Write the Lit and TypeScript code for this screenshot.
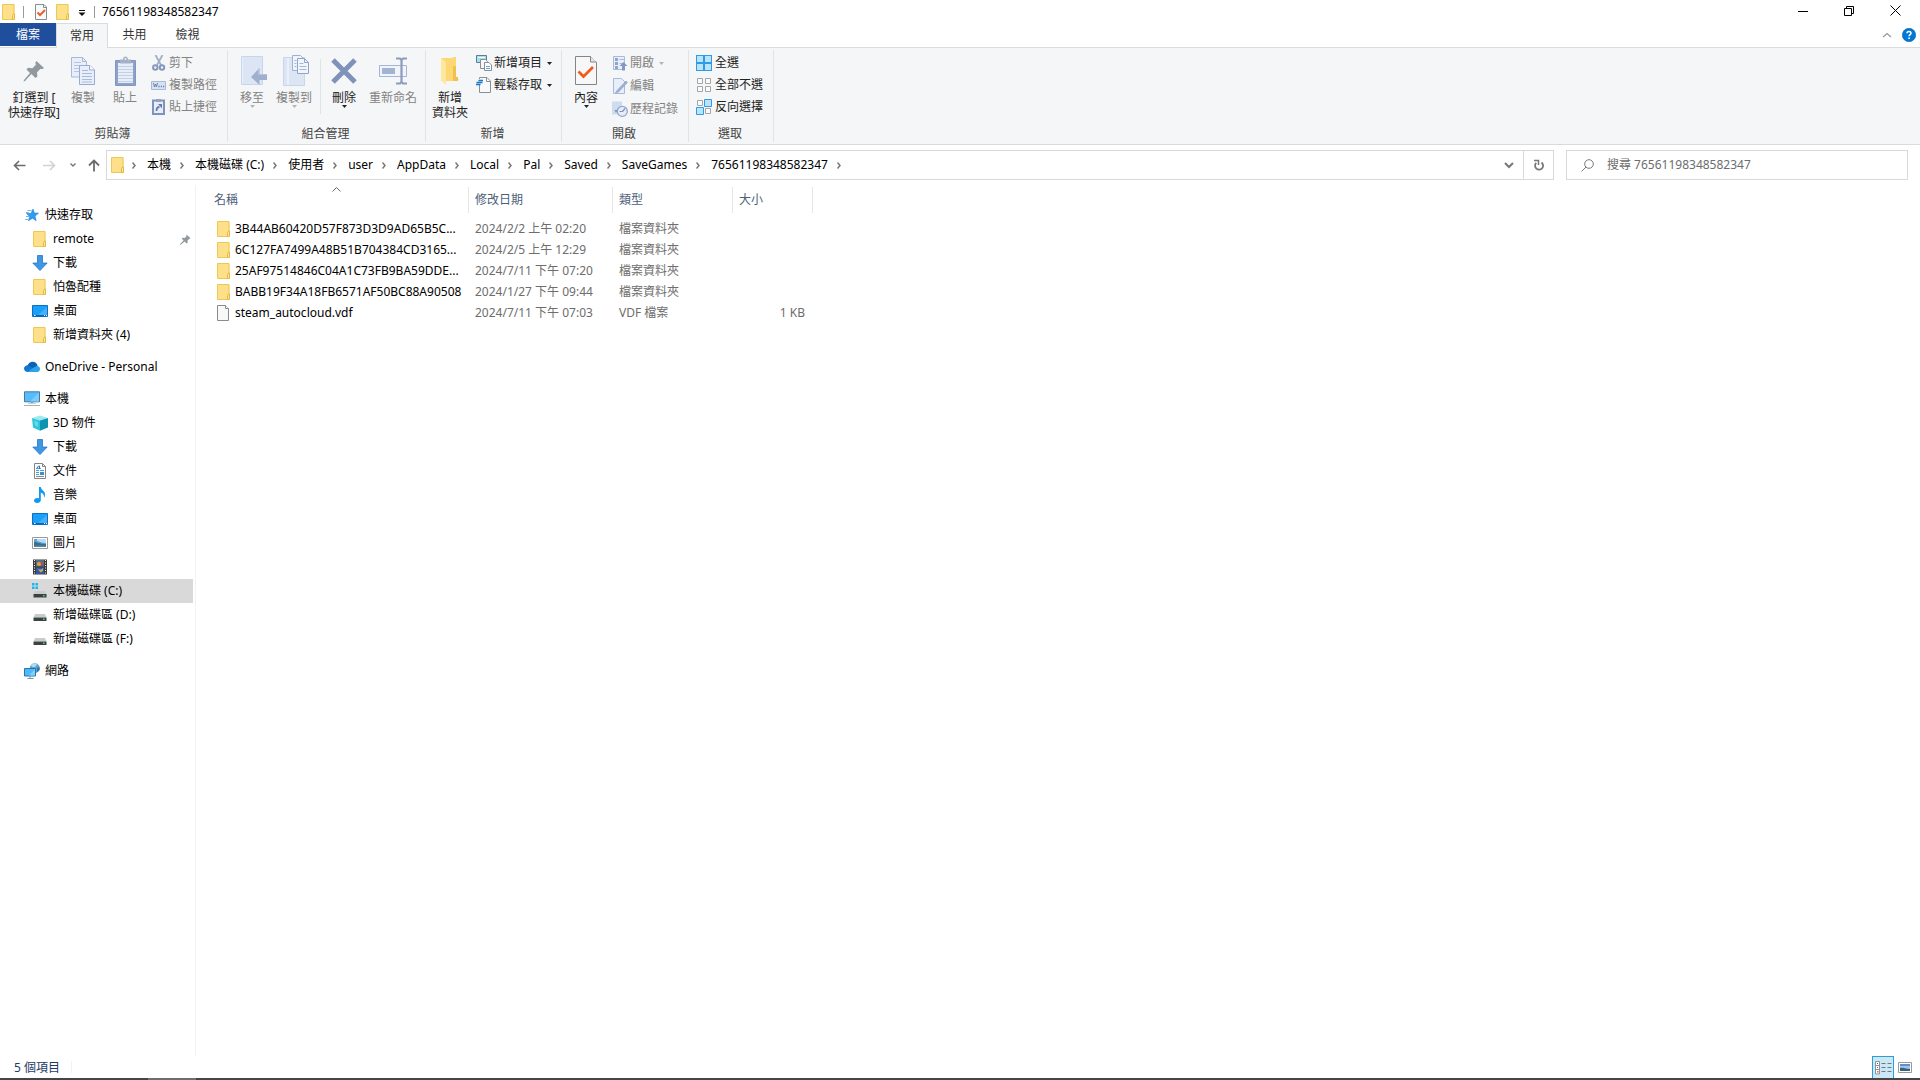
import { LitElement, html, svg, css, nothing, TemplateResult } from "lit";
import { customElement, property } from "lit/decorators.js";
import { classMap } from "lit/directives/class-map.js";

type Glyph = { w: number; h: number; art: TemplateResult };

const glyphs: Record<string, Glyph> = {
  folder: {
    w: 16, h: 16,
    art: svg`<path d="M1.5.5h12v15h-12z" fill="#ffe08a"/><path d="M13 11V.5H1.500v15h10.500" fill="none" stroke="#ecc955"/><path d="M11.500 15.500v-4l1-1.500h1v5.500z" fill="#ffe694" stroke="#e3ba40"/>`,
  },
  file: {
    w: 16, h: 16,
    art: svg`<path d="M1.500.5h8l3 3v12h-11z" fill="#f7f8f8" stroke="#8b8b8b"/><path d="M9.500.5v3h3" fill="#fff" stroke="#8b8b8b"/>`,
  },
  checkSmall: {
    w: 14, h: 16,
    art: svg`<path d="M1.500.5h8.500l2.500 2.500v12.500h-11z" fill="#f8f9fa" stroke="#8a8d90"/><path d="M9.500.5v3h3" fill="none" stroke="#8a8d90"/><path d="M3.500 8.500l2.500 2.500 5-5" fill="none" stroke="#e8622a" stroke-width="2"/>`,
  },
  customize: { w: 8, h: 6, art: svg`<path d="M1 0h6v1H1zM.5 2.500h7L4 6z" fill="#111"/>` },
  minimize: { w: 10, h: 10, art: svg`<path d="M0 5.500h10" stroke="#000"/>` },
  restore: { w: 10, h: 10, art: svg`<path d="M.5 2.500h7v7h-7zM2.500 2.500v-2h7v7h-2" fill="none" stroke="#000"/>` },
  close: { w: 11, h: 11, art: svg`<path d="M.5.5l10 10M10.500.5l-10 10" stroke="#000"/>` },
  collapse: { w: 10, h: 6, art: svg`<path d="M1 5l4-3.500L9 5" fill="none" stroke="#9a9a9a" stroke-width="1.300"/>` },
  help: {
    w: 14, h: 14,
    art: svg`<circle cx="7" cy="7" r="6.700" fill="#0078d7" stroke="#0b5ea8" stroke-width=".6"/><path d="M5 5.300C5 3 9 3 9 5.200 9 6.600 7.100 6.600 7.100 8.300" fill="none" stroke="#fff" stroke-width="1.500"/><path d="M6.300 9.500h1.600v1.500H6.300z" fill="#fff"/>`,
  },
  pinBig: {
    w: 22, h: 22,
    art: svg`<path d="M13.500 1l7.500 7-2 1.200-1.500-.4-3.500 3.400.4 4.300-1.900 1.500-4.100-4L2 21l-1.500.6.500-1.600 6-7L3.500 9.500 5 7.800l4.500.4 3.400-3.400-.6-2z" fill="#8f999f"/>`,
  },
  pinSmall: {
    w: 11, h: 11,
    art: svg`<path d="M6.500.5l4 3.800-1.300.7-1.700 1.600.2 2.200-1 .7L4.500 7.500.8 10.800H0L.2 10l3.300-3.500L1.700 4.600l.8-.9 2.200.2 1.700-1.700z" fill="#8f999f"/>`,
  },
  copy: {
    w: 24, h: 28,
    art: svg`<path d="M.5.500h11l4 4v15.500h-15z" fill="#e9effa" stroke="#a9b9d6"/><path d="M11.500.5v4h4" fill="none" stroke="#a9b9d6"/><path d="M3 5.500h7M3 8.500h7M3 11.500h5M3 14.500h5" stroke="#b7c5de"/><path d="M8.500 8.500h10.500l4.500 4.500v14.500h-15z" fill="#e9effa" stroke="#98abd0"/><path d="M18.500 8.500v4.500h5" fill="#fff" stroke="#98abd0"/><path d="M11 13.500h6M11 16.500h10M11 19.500h10M11 22.500h10M11 25h10" stroke="#a9bad8"/>`,
  },
  paste: {
    w: 21, h: 30,
    art: svg`<path d="M.5 4.500h20v25h-20z" fill="#8ea2c8" stroke="#8396bf"/><path d="M3 7h15v20H3z" fill="#e7eefa"/><path d="M5 3.500h3C8-.5 13-.5 13 3.500h3v4H5z" fill="#a5b1c6"/><circle cx="10.500" cy="3" r="1" fill="#eef2f8"/><path d="M3 10.500h15M3 13.500h15M3 16.500h15M3 19.500h15M3 22.500h15M3 25.500h15" stroke="#c3d0e6"/>`,
  },
  cut: {
    w: 16, h: 16,
    art: svg`<path d="M4.500 0l5.500 10M11.500 0L6 10" fill="none" stroke="#a3afc4" stroke-width="1.800"/><circle cx="4.300" cy="12.500" r="2.200" fill="none" stroke="#8597bb" stroke-width="2"/><circle cx="11" cy="12.500" r="2.200" fill="none" stroke="#8597bb" stroke-width="2"/>`,
  },
  path: {
    w: 16, h: 16,
    art: svg`<path d="M.5 4.500h14v8H.5z" fill="#d6e1f2" stroke="#a9bad8"/><path d="M2.500 6l1 4 1-3 1 3 1-4" fill="none" stroke="#6f84ad"/><path d="M7.500 9.500h1.200M9.800 9.500H11M12 9.500h1.200" stroke="#6f84ad" stroke-width="1.400"/>`,
  },
  shortcut: {
    w: 16, h: 16,
    art: svg`<path d="M2 1.500h11v13.500H2z" fill="#e7eefa" stroke="#8093bb" stroke-width="2"/><path d="M5 0h5v3H5z" fill="#93a2bd"/><path d="M5.500 12c0-3 1-4 3-4" fill="none" stroke="#667caa" stroke-width="1.800"/><path d="M7 5h4v4.500z" fill="#667caa"/>`,
  },
  moveTo: {
    w: 32, h: 30,
    art: svg`<g transform="translate(5 0)"><path d="M.5.500h21v28H.5z" fill="#dbe5f3" stroke="#c8d5ea"/><path d="M1.500 1v27" stroke="#eaf0f9"/><path d="M18.500 12v6H26v6h-7.500v5L10 21z" fill="#9fb0cf"/><path d="M17.500 12.500v6H26" fill="none" stroke="#b4c2da"/></g>`,
  },
  copyTo: {
    w: 32, h: 32,
    art: svg`<g transform="translate(5 0)"><path d="M.5 2.500h21v28H.5z" fill="#dbe5f3" stroke="#c8d5ea"/><path d="M5 3v27" stroke="#eaf0f9" stroke-width="2"/><path d="M9.500.500h8l3 3v12h-11z" fill="#eff4fb" stroke="#9fb1d2"/><path d="M14.500 3.500h7l4 4v11h-11z" fill="#f2f6fc" stroke="#8fa4cb"/><path d="M21.500 3.500v4h4" fill="none" stroke="#8fa4cb"/><path d="M16.500 8.500h4M16.500 11.500h7M16.500 14.500h7M11.500 5.500h2M11.500 8.500h2M11.500 11.500h2" stroke="#a5b7d6"/></g>`,
  },
  remove: { w: 26, h: 26, art: svg`<path d="M2 2l22 22M24 2L2 24" stroke="#7f93ba" stroke-width="5"/>` },
  rename: {
    w: 28, h: 28,
    art: svg`<path d="M.5 8.500h27v11H.5z" fill="#f1f5fb" stroke="#a5b6d5"/><path d="M3 11h13v6H3z" fill="#a3b4d2"/><path d="M17 1.500h4l1.500 1.500L24 1.500h4M17 26.500h4l1.500-1.500 1.500 1.500h4M22.500 2.500v23" fill="none" stroke="#8b9cbc" stroke-width="2.200"/>`,
  },
  newFolder: {
    w: 20, h: 28,
    art: svg`<path d="M1 3l15-3v20l3 3H1z" fill="#f5c95b"/><path d="M1 1h15v23H1z" fill="#fbd874"/><path d="M13 9h3v11h2v4h-5z" fill="#f1c04e"/><path d="M1 1l5 4v23l-5-5z" fill="#ffe79d"/>`,
  },
  newItem: {
    w: 16, h: 16,
    art: svg`<path d="M.5.500h10v7H.5z" fill="#a9def0" stroke="#5b7f8d"/><path d="M2 2.500h7" stroke="#fff"/><path d="M4.500 4.500h5l2 2v7h-7z" fill="#f8f9fa" stroke="#8b8f92"/><path d="M8.500 7.500h4.500l2.500 2.500v5.500h-7z" fill="#fff" stroke="#8b8f92"/><path d="M10 11.500h4M10 13.500h4" stroke="#5ca8e0"/>`,
  },
  easyAccess: {
    w: 16, h: 16,
    art: svg`<path d="M3.500.500h7.500l3.500 3.500v11.500h-11z" fill="#f8f9fa" stroke="#8b8f92"/><path d="M10.500.5v4h4" fill="none" stroke="#8b8f92"/><path d="M2 2h5v6H0z" fill="#f5f6f7"/><path d="M2.500 3.500H7M.5 5.500h6M0 7.500h4.500" stroke="#1c78c8" stroke-width="1.300"/>`,
  },
  properties: {
    w: 22, h: 29,
    art: svg`<path d="M.5.500h15l6 6v22H.5z" fill="#f7f7f7" stroke="#858585"/><path d="M15.500.5v5.500h6" fill="#e6e6e6" stroke="#858585"/><path d="M3.500 15.500l5 5L18 11" fill="none" stroke="#f05a1a" stroke-width="2.800"/>`,
  },
  open: {
    w: 16, h: 16,
    art: svg`<path d="M1.500 1.500h11v13h-11z" fill="#e9effa" stroke="#a9bad8"/><path d="M3 3h3v3H3zM3 7h3v3H3zM3 11h3v3H3z" fill="#91a4ca"/><path d="M7.500 4.500H12M7.500 8.500H11" stroke="#a9bad8"/><path d="M11.500 7l4 4h-2.500v4.500h-3V11H7.500z" fill="#8398c2"/>`,
  },
  edit: {
    w: 16, h: 16,
    art: svg`<path d="M1.500.500h8l3 3v12h-11z" fill="#e9effa" stroke="#a9bad8"/><path d="M5 12.500L14 3l1.500 1.500L6.500 14l-3 1z" fill="#9db0d2" stroke="#8ca0c8" stroke-width=".6"/>`,
  },
  history: {
    w: 16, h: 16,
    art: svg`<path d="M0 .5h10v13H0z" fill="#cfdcf0"/><circle cx="10.300" cy="10.300" r="5" fill="#e6edf8" stroke="#93a6ca" stroke-width="1.300"/><path d="M10.500 10.500L13 7.500M10.500 10.500H7.500" stroke="#7d92bd" stroke-width="1.200"/><path d="M2.500 9l3 0-1.500 3z" fill="#7d92bd"/>`,
  },
  selectAll: {
    w: 16, h: 16,
    art: svg`<path d="M0 0h16v16H0z" fill="#2f9be8"/><path d="M1 1h6v6H1zM9 1h6v6H9zM1 9h6v6H1zM9 9h6v6H9z" fill="#b9e4fc"/>`,
  },
  selectNone: {
    w: 16, h: 16,
    art: svg`<path d="M1.500 1.500h5v5h-5zM9.500 1.500h5v5h-5zM1.500 9.500h5v5h-5zM9.500 9.500h5v5h-5z" fill="#fafafa" stroke="#a5a5a5"/>`,
  },
  selectInvert: {
    w: 16, h: 16,
    art: svg`<path d="M1.500 1.500h5v5h-5zM9.500 9.500h5v5h-5z" fill="#fafafa" stroke="#a5a5a5"/><path d="M8.500.500h7v7h-7zM.5 8.500h7v7h-7z" fill="#b9e4fc" stroke="#2f9be8"/>`,
  },
  back: { w: 13, h: 11, art: svg`<path d="M12.500 5.500H1.500M6 1L1.500 5.500 6 10" fill="none" stroke="#6b6b6b" stroke-width="1.600"/>` },
  forward: { w: 13, h: 11, art: svg`<path d="M0 5.500h11.500M7 1l4.500 4.500L7 10" fill="none" stroke="#d2d2d2" stroke-width="1.600"/>` },
  up: { w: 12, h: 13, art: svg`<path d="M6 12.500V1.500M1 6.500l5-5 5 5" fill="none" stroke="#6b6b6b" stroke-width="1.800"/>` },
  recent: { w: 6, h: 4, art: svg`<path d="M.5.5L3 3 5.500.5" fill="none" stroke="#777" stroke-width="1.400"/>` },
  drop: { w: 10, h: 7, art: svg`<path d="M1 1l4 4 4-4" fill="none" stroke="#777" stroke-width="2"/>` },
  crumb: { w: 4, h: 7, art: svg`<path d="M.5.5l2.500 3-2.500 3" fill="none" stroke="#777" stroke-width="1.500"/>` },
  refresh: {
    w: 10, h: 12,
    art: svg`<path d="M7.500 3.500a4 4 0 1 1-5.300.4" fill="none" stroke="#777" stroke-width="1.800"/><path d="M0 1.500h4.500V6" fill="none" stroke="#777" stroke-width="1.500"/>`,
  },
  search: { w: 13, h: 13, art: svg`<circle cx="8" cy="5" r="4.300" fill="none" stroke="#7a7a7a"/><path d="M5 8L.5 12.500" stroke="#7a7a7a"/>` },
  sort: { w: 9, h: 5, art: svg`<path d="M.5 4.500l4-4 4 4" fill="none" stroke="#6b6b6b"/>` },
  menuArrow: { w: 5, h: 3, art: svg`<path d="M0 0h5L2.500 3z" fill="currentColor"/>` },
  star: {
    w: 16, h: 16,
    art: svg`<path d="M9 2l1.300 4 4.200.2-3.500 2.700 1.200 4.800L8.500 11.200l-4 2.500 1.200-4.300L2.500 6.500H7z" fill="#2e9df0" stroke="#1c7fd2" stroke-width=".6"/><path d="M3.500 3.500h4M2 5.500h3M2 9.500h3M1 12.500h3" stroke="#6cbcf2" stroke-width="1.100"/>`,
  },
  download: {
    w: 16, h: 16,
    art: svg`<path d="M5.500.500h5v7.500h4.700L8 15.500.8 8h4.700z" fill="#3f97e4" stroke="#2376c8" stroke-width=".8"/>`,
  },
  desktop: {
    w: 16, h: 16,
    art: svg`<path d="M.5 2.500h15v11H.5z" fill="#18a0fb" stroke="#0d6fbd"/><path d="M15 4v9H5z" fill="#43b2fb"/><path d="M1 12.500h14" stroke="#0b64ad"/><path d="M2 12.500h1.500M12 12.500h1M14 12.500h1" stroke="#fff"/>`,
  },
  cloud: {
    w: 16, h: 16,
    art: svg`<path d="M3.500 8C3.500 5 6 2.800 8.700 2.800c2.300 0 4.300 1.400 4.900 3.700L10 11z" fill="#0b62b4"/><path d="M4 13C1.500 13 0 11.300 0 9.500 0 7.400 2 6 4 6.200L12 11l-3 2z" fill="#1377d0"/><path d="M3.500 13L9.700 8.500 13 7c2 .2 3 1.500 3 3 0 1.700-1.300 3-3 3z" fill="#2aa5ec"/>`,
  },
  pc: {
    w: 16, h: 16,
    art: svg`<path d="M.5.800h15v10H.5z" fill="#55bdfb" stroke="#47799b"/><path d="M15 1.500v9H6z" fill="#7acdfd"/><path d="M6.500 11h3v1.500h-3z" fill="#8ea3b0"/><path d="M0 14.500h16" stroke="#a1b1bb"/><path d="M4 12.500h8" stroke="#c3ced5"/>`,
  },
  cube: {
    w: 16, h: 16,
    art: svg`<path d="M0 3L8 .5 16 3 8 5.500z" fill="#9aeaf2"/><path d="M0 3l8 2.500v10.300L1 12.500z" fill="#31c3d7"/><path d="M8 5.500L16 3v9.500l-8 3.300z" fill="#0d94b1"/><path d="M2 5.500L6 7v5L3 10.500z" fill="#5fdbe8"/>`,
  },
  document: {
    w: 16, h: 16,
    art: svg`<path d="M2.500.500h8l3 3v12h-11z" fill="#fdfdfd" stroke="#858585"/><path d="M10.500.5v3h3" fill="none" stroke="#858585"/><path d="M4 5.500h5M8 7.500h4M4 7.500h3M4 9.500h3M4 11.500h3" stroke="#4c9bd6"/><path d="M5 5l1.500-2h1v3" fill="none" stroke="#2178c0"/><path d="M8 9h4v3H8z" fill="#3b91c9"/><path d="M4 13.500h8" stroke="#8a8a8a"/>`,
  },
  music: {
    w: 16, h: 16,
    art: svg`<path d="M7 0h1.800c.2 3 4.200 3.500 4.200 7.500 0 1.300-.5 2.500-1 3.300.2-3-1-4.500-3.200-5.300V13c0 1.700-1.600 3-3.600 3S2 15 2 13.500 3.600 11 5.300 11c.7 0 1.300.1 1.700.4z" fill="#0f98f0"/>`,
  },
  picture: {
    w: 16, h: 16,
    art: svg`<path d="M.5 2.500h15v11H.5z" fill="#fff" stroke="#999"/><path d="M2 4h12v8H2z" fill="#5b9fe0"/><path d="M5 4h9v4c-3 0-5-1-9-2z" fill="#b9dcf5"/><path d="M2 7c3 0 5 2 12 2v3H2z" fill="#3d6f78"/><path d="M2 10.500h12V12H2z" fill="#4f86b6"/>`,
  },
  video: {
    w: 16, h: 16,
    art: svg`<path d="M1 .5h14v15H1z" fill="#3b3b3b"/><path d="M4 1h8v6.500H4z" fill="#5a6a8a"/><path d="M4 8.500h8v6.500H4z" fill="#32589f"/><circle cx="7" cy="5" r="2" fill="#e3a33a"/><circle cx="10" cy="4" r="1.300" fill="#c74a36"/><path d="M5 9c2 2 4 2 6 0v3L8.500 13.500z" fill="#c9a556"/><path d="M2.500 1v15M13.500 1v15" stroke="#f2f2f2" stroke-dasharray="1 1.500"/>`,
  },
  driveC: {
    w: 16, h: 16,
    art: svg`<path d="M0 0h2.500v2.500H0zM3.500 0H6v2.500H3.500zM0 3.500h2.500V6H0zM3.500 3.500H6V6H3.500z" fill="#1cb5f0"/><path d="M3 8h10l1.500 3H1.500z" fill="#c9cccd"/><path d="M1.500 11h13v3.500h-13z" fill="#3e4143"/><path d="M11 12h1.500v1.500H11z" fill="#43e35b"/>`,
  },
  drive: {
    w: 16, h: 16,
    art: svg`<path d="M3 7h10l1.500 3.500H1.500z" fill="#c9cccd"/><path d="M1.500 10.500h13v3.500h-13z" fill="#3e4143"/><path d="M11 11.500h1.500V13H11z" fill="#43e35b"/>`,
  },
  network: {
    w: 16, h: 16,
    art: svg`<circle cx="10.800" cy="5.200" r="5" fill="#5aa3cf"/><path d="M7 2.500C9 0 12 .2 13 1.500L11 4 8.500 4z" fill="#b7d9e8"/><path d="M13 5l2.500-1v3L13 9z" fill="#31759f"/><path d="M.5 5.500h11v7.500H.5z" fill="#4db8fa" stroke="#2c74a5"/><path d="M11 6v6.500H5z" fill="#82d0fd"/><path d="M3.500 15.500h6M6 13v2" stroke="#6f99b3"/>`,
  },
  details: {
    w: 17, h: 14,
    art: svg`<path d="M.5.500h4v12.500h-4zM.5 4.500h4M.5 8.500h4" fill="#fff" stroke="#8f9396"/><path d="M2 2h1v1H2z" fill="#555"/><path d="M2 6h1v1H2z" fill="#2277d0"/><path d="M2 10h1.500v1.500H2z" fill="#e8622a"/><path d="M6.500 2.500h4M12.500 2.500h4M6.500 6.500h4M12.500 6.500h4M6.500 10.500h4M12.500 10.500h4" stroke="#6e7a80"/>`,
  },
  thumbs: {
    w: 14, h: 11,
    art: svg`<path d="M.5.500h13v10H.5z" fill="#fff" stroke="#999"/><path d="M2 2h10v7H2z" fill="#9cc7f0"/><path d="M2 2h10v2H2z" fill="#5d8fd2"/><path d="M2 6c4-1 6 1 10 1v2H2z" fill="#3d6270"/>`,
  },
};

const icon = (name: string) => {
  const g = glyphs[name];
  return html`<svg class="glyph" width=${g.w} height=${g.h} viewBox="0 0 ${g.w} ${g.h}" aria-hidden="true">${g.art}</svg>`;
};

const base = css`
  * { box-sizing: border-box; }
  button, input, a { font: inherit; color: inherit; }
  button { appearance: none; border: 0; background: none; padding: 0; margin: 0; }
  a { text-decoration: none; }
  .glyph { display: block; flex: none; }
`;

type Cmd = { icon: string; lines: string[]; off?: boolean; menu?: boolean; wide?: boolean };
type Group = { name: string; width: string; big: (Cmd | null)[]; small: Cmd[]; loose?: boolean };

const groups: Group[] = [
  {
    name: "剪貼簿", width: "clipboard",
    big: [
      { icon: "pinBig", lines: ["釘選到 [", "快速存取]"], wide: true },
      { icon: "copy", lines: ["複製"], off: true },
      { icon: "paste", lines: ["貼上"], off: true },
    ],
    small: [
      { icon: "cut", lines: ["剪下"], off: true },
      { icon: "path", lines: ["複製路徑"], off: true },
      { icon: "shortcut", lines: ["貼上捷徑"], off: true },
    ],
  },
  {
    name: "組合管理", width: "organize",
    big: [
      { icon: "moveTo", lines: ["移至"], off: true, menu: true },
      { icon: "copyTo", lines: ["複製到"], off: true, menu: true },
      null,
      { icon: "remove", lines: ["刪除"], menu: true },
      { icon: "rename", lines: ["重新命名"], off: true, wide: true },
    ],
    small: [],
  },
  {
    name: "新增", width: "new",
    big: [{ icon: "newFolder", lines: ["新增", "資料夾"] }],
    small: [
      { icon: "newItem", lines: ["新增項目"], menu: true },
      { icon: "easyAccess", lines: ["輕鬆存取"], menu: true },
    ],
  },
  {
    name: "開啟", width: "open", loose: true,
    big: [{ icon: "properties", lines: ["內容"], menu: true }],
    small: [
      { icon: "open", lines: ["開啟"], off: true, menu: true },
      { icon: "edit", lines: ["編輯"], off: true },
      { icon: "history", lines: ["歷程記錄"], off: true },
    ],
  },
  {
    name: "選取", width: "select",
    big: [],
    small: [
      { icon: "selectAll", lines: ["全選"] },
      { icon: "selectNone", lines: ["全部不選"] },
      { icon: "selectInvert", lines: ["反向選擇"] },
    ],
  },
];

@customElement("explorer-ribbon")
export class ExplorerRibbon extends LitElement {
  static styles = [base, css`
    :host { display: flex; background: #f5f6f7; border-top: 1px solid #dadbdc; border-bottom: 1px solid #dadbdc; height: 98px; padding: 2px 0; }
    .group { display: flex; flex-direction: column; justify-content: space-between; border-right: 1px solid #e2e3e4; flex: none; padding-top: 1px; }
    .clipboard { width: 228px; }
    .organize { width: 198px; }
    .new { width: 136px; }
    .open { width: 127px; }
    .select { width: 85px; }
    .commands { display: flex; gap: 2px; align-items: flex-start; padding-left: 4px; }
    .clipboard .commands { padding-left: 7px; }
    .big { width: 40px; display: flex; flex-direction: column; align-items: center; line-height: 15px; white-space: nowrap; color: #222; }
    .big.wide { width: 54px; }
    .big.off, .small.off { color: #838383; }
    .slot { height: 39px; display: flex; align-items: center; }
    .off .menu { color: #b5b5b5; }
    .small .menu { margin-left: 3px; }
    .split { width: 1px; height: 55px; background: #e2e3e4; margin: 8px 1px 0 4px; }
    .stack { display: flex; flex-direction: column; padding-top: 1px; }
    .loose { gap: 1px; }
    .small { height: 22px; display: flex; align-items: center; gap: 2px; padding: 0 4px; white-space: nowrap; color: #222; }
    .select .small { gap: 3px; padding: 0 3px; }
    .name { text-align: center; line-height: 16px; padding-right: 2px; color: #444; }
  `];

  private big(c: Cmd | null) {
    if (!c) return html`<span class="split"></span>`;
    return html`<button class=${classMap({ big: true, off: !!c.off, wide: !!c.wide })} ?disabled=${c.off}>
      <span class="slot">${icon(c.icon)}</span>
      ${c.lines.map((l) => html`<span>${l}</span>`)}
      ${c.menu ? html`<span class="menu">${icon("menuArrow")}</span>` : nothing}
    </button>`;
  }

  render() {
    return groups.map((g) => html`<section class="group ${g.width}" aria-label=${g.name}>
      <div class="commands">
        ${g.big.map((c) => this.big(c))}
        ${g.small.length ? html`<div class=${classMap({ stack: true, loose: !!g.loose })}>
          ${g.small.map((c) => html`<button class=${classMap({ small: true, off: !!c.off })} ?disabled=${c.off}>
            ${icon(c.icon)}<span>${c.lines[0]}</span>${c.menu ? html`<span class="menu">${icon("menuArrow")}</span>` : nothing}
          </button>`)}
        </div>` : nothing}
      </div>
      <div class="name">${g.name}</div>
    </section>`);
  }
}

type Node = { icon: string; label: string; pinned?: boolean; current?: boolean };
type Branch = { root: Node; items: Node[] };

const tree: Branch[] = [
  {
    root: { icon: "star", label: "快速存取" },
    items: [
      { icon: "folder", label: "remote", pinned: true },
      { icon: "download", label: "下載" },
      { icon: "folder", label: "怕魯配種" },
      { icon: "desktop", label: "桌面" },
      { icon: "folder", label: "新增資料夾 (4)" },
    ],
  },
  { root: { icon: "cloud", label: "OneDrive - Personal" }, items: [] },
  {
    root: { icon: "pc", label: "本機" },
    items: [
      { icon: "cube", label: "3D 物件" },
      { icon: "download", label: "下載" },
      { icon: "document", label: "文件" },
      { icon: "music", label: "音樂" },
      { icon: "desktop", label: "桌面" },
      { icon: "picture", label: "圖片" },
      { icon: "video", label: "影片" },
      { icon: "driveC", label: "本機磁碟 (C:)", current: true },
      { icon: "drive", label: "新增磁碟區 (D:)" },
      { icon: "drive", label: "新增磁碟區 (F:)" },
    ],
  },
  { root: { icon: "network", label: "網路" }, items: [] },
];

@customElement("explorer-tree")
export class ExplorerTree extends LitElement {
  static styles = [base, css`
    :host { display: block; width: 196px; flex: none; border-right: 1px solid #f2f2f2; padding: 18px 2px 0 0; }
    .tree { display: flex; flex-direction: column; gap: 8px; }
    .node { display: flex; align-items: center; height: 24px; gap: 5px; padding: 0 2px 0 32px; color: #000; white-space: nowrap; }
    .root { padding-left: 24px; }
    .current { background: #d9d9d9; }
    .label { flex: 1; }
  `];

  private node(n: Node, root: boolean) {
    return html`<a href="#" class=${classMap({ node: true, root, current: !!n.current })}>
      ${icon(n.icon)}<span class="label">${n.label}</span>${n.pinned ? icon("pinSmall") : nothing}
    </a>`;
  }

  render() {
    return html`<nav class="tree" aria-label="瀏覽">
      ${tree.map((b) => html`<div>${this.node(b.root, true)}${b.items.map((n) => this.node(n, false))}</div>`)}
    </nav>`;
  }
}

type Entry = { icon: string; name: string; date: string; kind: string; size: string };

const entries: Entry[] = [
  { icon: "folder", name: "3B44AB60420D57F873D3D9AD65B5C...", date: "2024/2/2 上午 02:20", kind: "檔案資料夾", size: "" },
  { icon: "folder", name: "6C127FA7499A48B51B704384CD3165...", date: "2024/2/5 上午 12:29", kind: "檔案資料夾", size: "" },
  { icon: "folder", name: "25AF97514846C04A1C73FB9BA59DDE...", date: "2024/7/11 下午 07:20", kind: "檔案資料夾", size: "" },
  { icon: "folder", name: "BABB19F34A18FB6571AF50BC88A90508", date: "2024/1/27 下午 09:44", kind: "檔案資料夾", size: "" },
  { icon: "file", name: "steam_autocloud.vdf", date: "2024/7/11 下午 07:03", kind: "VDF 檔案", size: "1 KB" },
];

@customElement("explorer-files")
export class ExplorerFiles extends LitElement {
  @property({ attribute: false }) rows: Entry[] = [];

  static styles = [base, css`
    :host { display: block; flex: 1; padding: 2px 0 0 9px; }
    .files { border-collapse: separate; border-spacing: 0; table-layout: fixed; width: 608px; }
    .c-name { width: 264px; }
    .c-date { width: 144px; }
    .c-kind { width: 120px; }
    .c-size { width: 80px; }
    th { height: 26px; padding: 0 0 0 6px; font-weight: 400; text-align: left; color: #4c607a; border-right: 1px solid #e5e5e5; position: relative; }
    th:first-child { padding-left: 9px; }
    .sort { position: absolute; top: 0; left: 0; right: 0; display: grid; justify-items: center; }
    .gap td { height: 5px; }
    td { height: 21px; padding: 0 0 0 6px; color: #6d6d6d; white-space: nowrap; }
    .name { display: flex; align-items: center; gap: 3px; padding-left: 5px; color: #000; }
    .size { text-align: right; padding-right: 8px; }
  `];

  render() {
    return html`<table class="files">
      <colgroup><col class="c-name" /><col class="c-date" /><col class="c-kind" /><col class="c-size" /></colgroup>
      <thead><tr>
        <th scope="col">名稱<span class="sort">${icon("sort")}</span></th>
        <th scope="col">修改日期</th><th scope="col">類型</th><th scope="col">大小</th>
      </tr></thead>
      <tbody>
        <tr class="gap" aria-hidden="true"><td colspan="4"></td></tr>
        ${this.rows.map((r) => html`<tr>
          <td><span class="name">${icon(r.icon)}<span>${r.name}</span></span></td>
          <td>${r.date}</td><td>${r.kind}</td><td class="size">${r.size}</td>
        </tr>`)}
      </tbody>
    </table>`;
  }
}

const crumbs = ["本機", "本機磁碟 (C:)", "使用者", "user", "AppData", "Local", "Pal", "Saved", "SaveGames", "76561198348582347"];

@customElement("app-root")
export class AppRoot extends LitElement {
  static styles = [base, css`
    :host { display: flex; flex-direction: column; min-height: 100vh; background: #fff; color: #000; font: 12px/16px "Noto Sans", "Noto Sans CJK TC", sans-serif; }
    .title { display: flex; align-items: center; height: 23px; padding: 0 2px 0 1px; }
    .rule { width: 1px; height: 12px; background: #9a9a9a; }
    .quick { display: flex; align-items: center; }
    .quick .rule:first-of-type { margin: 0 10px 0 6px; }
    .quick button { margin-right: 7px; }
    .quick .more { margin: 2px 8px 0 0; }
    .caption { font-size: 12px; font-weight: 400; margin: 0 auto 0 7px; }
    .window { display: flex; align-self: flex-start; }
    .window button { width: 46px; height: 21px; display: grid; place-items: center; }
    .tabs { display: flex; height: 24px; }
    .tab { width: 53px; color: #333; }
    .tab.file { width: 56px; height: 23px; background: #1e4e9c; color: #fff; }
    .tab.active { width: 52px; height: 25px; background: #f5f6f7; border: 1px solid #dadbdc; border-bottom: 0; z-index: 1; }
    .tools { margin-left: auto; display: flex; align-items: center; gap: 10px; padding-right: 4px; }
    .nav { display: flex; align-items: center; padding: 5px 12px 5px 13px; }
    .arrows { display: flex; align-items: center; width: 93px; }
    .arrows .fwd { margin: 0 14px 0 17px; }
    .arrows .up { margin-left: 12px; }
    .address { flex: 1; display: flex; height: 30px; border: 1px solid #d9d9d9; align-items: center; padding-left: 3px; min-width: 0; }
    .crumbs { display: flex; align-items: center; flex: 1; padding-left: 6px; }
    .crumbs a { padding: 0 9px 0 11px; }
    .address .more { width: 28px; height: 28px; display: grid; place-items: center; }
    .address .reload { width: 30px; height: 28px; display: grid; place-items: center; border-left: 1px solid #d9d9d9; }
    .find { width: 342px; height: 30px; border: 1px solid #d9d9d9; margin-left: 12px; display: flex; align-items: center; gap: 13px; padding-left: 14px; }
    .find input { flex: 1; border: 0; outline: 0; padding: 0; background: none; appearance: none; min-width: 0; }
    .find input::placeholder { color: #6d6d6d; opacity: 1; }
    .main { flex: 1; display: flex; }
    .status { display: flex; align-items: center; height: 22px; padding-left: 14px; color: #1e3a66; }
    .count { padding-top: 2px; }
    .status .rule { margin-left: 11px; background: #f2f2f2; }
    .views { margin-left: auto; display: flex; align-items: center; gap: 4px; padding-right: 8px; height: 22px; }
    .views button { display: grid; place-items: center; height: 22px; }
    .views .on { width: 22px; background: #cce8f6; border: 1px solid #26a0da; border-bottom: 0; }
    .strip { height: 2px; background: #454545; display: flex; padding-left: 148px; }
    .strip i { width: 48px; background: #6e6e6e; }
  `];

  render() {
    return html`
      <header class="title">
        <div class="quick">
          ${icon("folder")}<span class="rule"></span>
          <button aria-label="內容">${icon("checkSmall")}</button>
          <button aria-label="新增資料夾">${icon("folder")}</button>
          <button class="more" aria-label="自訂">${icon("customize")}</button>
          <span class="rule"></span>
        </div>
        <h1 class="caption">76561198348582347</h1>
        <div class="window">
          <button aria-label="最小化">${icon("minimize")}</button>
          <button aria-label="還原">${icon("restore")}</button>
          <button aria-label="關閉">${icon("close")}</button>
        </div>
      </header>
      <div class="tabs">
        <button class="tab file">檔案</button>
        <button class="tab active">常用</button>
        <button class="tab">共用</button>
        <button class="tab">檢視</button>
        <div class="tools">
          <button aria-label="收合">${icon("collapse")}</button>
          <button aria-label="說明">${icon("help")}</button>
        </div>
      </div>
      <explorer-ribbon></explorer-ribbon>
      <div class="nav">
        <div class="arrows">
          <button aria-label="上一頁">${icon("back")}</button>
          <button class="fwd" aria-label="下一頁">${icon("forward")}</button>
          <button aria-label="最近">${icon("recent")}</button>
          <button class="up" aria-label="上移">${icon("up")}</button>
        </div>
        <div class="address">
          ${icon("folder")}
          <div class="crumbs">
            ${crumbs.map((c) => html`${icon("crumb")}<a href="#">${c}</a>`)}${icon("crumb")}
          </div>
          <button class="more" aria-label="先前的位置">${icon("drop")}</button>
          <button class="reload" aria-label="重新整理">${icon("refresh")}</button>
        </div>
        <label class="find">${icon("search")}<input type="search" aria-label="搜尋" placeholder="搜尋 76561198348582347" /></label>
      </div>
      <main class="main">
        <explorer-tree></explorer-tree>
        <explorer-files .rows=${entries}></explorer-files>
      </main>
      <footer class="status">
        <span class="count">5 個項目</span><span class="rule"></span>
        <div class="views">
          <button class="on" aria-label="詳細資料">${icon("details")}</button>
          <button aria-label="大圖示">${icon("thumbs")}</button>
        </div>
      </footer>
      <div class="strip"><i></i></div>
    `;
  }
}
